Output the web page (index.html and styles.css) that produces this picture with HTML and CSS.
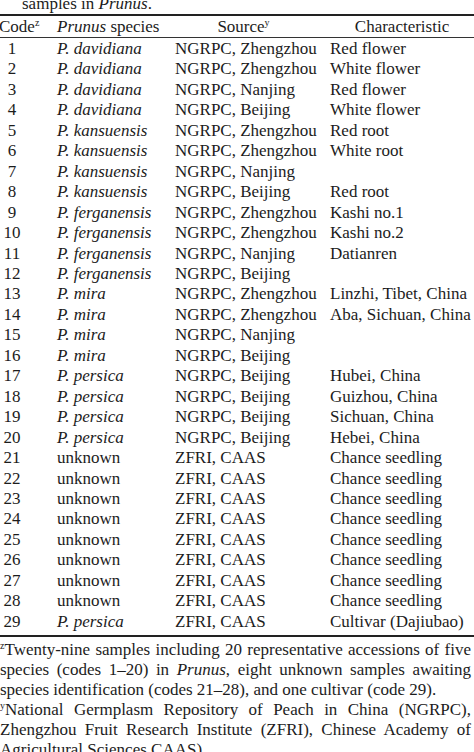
FILE: index.html
```html
<!DOCTYPE html>
<html>
<head>
<meta charset="utf-8">
<link rel="stylesheet" href="styles.css">
</head>
<body>
<div class="page">
  <div class="title">samples in <i>Prunus</i>.</div>
  <table class="data">
    <colgroup>
      <col class="c-code"><col class="c-sp"><col class="c-src"><col class="c-ch">
    </colgroup>
    <thead>
      <tr>
        <th class="h-code">Code<sup>z</sup></th>
        <th class="h-sp"><i>Prunus</i> species</th>
        <th class="h-src">Source<sup>y</sup></th>
        <th class="h-ch">Characteristic</th>
      </tr>
    </thead>
    <tbody>
      <tr><td>1</td><td><i>P. davidiana</i></td><td>NGRPC, Zhengzhou</td><td>Red flower</td></tr>
      <tr><td>2</td><td><i>P. davidiana</i></td><td>NGRPC, Zhengzhou</td><td>White flower</td></tr>
      <tr><td>3</td><td><i>P. davidiana</i></td><td>NGRPC, Nanjing</td><td>Red flower</td></tr>
      <tr><td>4</td><td><i>P. davidiana</i></td><td>NGRPC, Beijing</td><td>White flower</td></tr>
      <tr><td>5</td><td><i>P. kansuensis</i></td><td>NGRPC, Zhengzhou</td><td>Red root</td></tr>
      <tr><td>6</td><td><i>P. kansuensis</i></td><td>NGRPC, Zhengzhou</td><td>White root</td></tr>
      <tr><td>7</td><td><i>P. kansuensis</i></td><td>NGRPC, Nanjing</td><td></td></tr>
      <tr><td>8</td><td><i>P. kansuensis</i></td><td>NGRPC, Beijing</td><td>Red root</td></tr>
      <tr><td>9</td><td><i>P. ferganensis</i></td><td>NGRPC, Zhengzhou</td><td>Kashi no.1</td></tr>
      <tr><td>10</td><td><i>P. ferganensis</i></td><td>NGRPC, Zhengzhou</td><td>Kashi no.2</td></tr>
      <tr><td>11</td><td><i>P. ferganensis</i></td><td>NGRPC, Nanjing</td><td>Datianren</td></tr>
      <tr><td>12</td><td><i>P. ferganensis</i></td><td>NGRPC, Beijing</td><td></td></tr>
      <tr><td>13</td><td><i>P. mira</i></td><td>NGRPC, Zhengzhou</td><td>Linzhi, Tibet, China</td></tr>
      <tr><td>14</td><td><i>P. mira</i></td><td>NGRPC, Zhengzhou</td><td>Aba, Sichuan, China</td></tr>
      <tr><td>15</td><td><i>P. mira</i></td><td>NGRPC, Nanjing</td><td></td></tr>
      <tr><td>16</td><td><i>P. mira</i></td><td>NGRPC, Beijing</td><td></td></tr>
      <tr><td>17</td><td><i>P. persica</i></td><td>NGRPC, Beijing</td><td>Hubei, China</td></tr>
      <tr><td>18</td><td><i>P. persica</i></td><td>NGRPC, Beijing</td><td>Guizhou, China</td></tr>
      <tr><td>19</td><td><i>P. persica</i></td><td>NGRPC, Beijing</td><td>Sichuan, China</td></tr>
      <tr><td>20</td><td><i>P. persica</i></td><td>NGRPC, Beijing</td><td>Hebei, China</td></tr>
      <tr><td>21</td><td>unknown</td><td>ZFRI, CAAS</td><td>Chance seedling</td></tr>
      <tr><td>22</td><td>unknown</td><td>ZFRI, CAAS</td><td>Chance seedling</td></tr>
      <tr><td>23</td><td>unknown</td><td>ZFRI, CAAS</td><td>Chance seedling</td></tr>
      <tr><td>24</td><td>unknown</td><td>ZFRI, CAAS</td><td>Chance seedling</td></tr>
      <tr><td>25</td><td>unknown</td><td>ZFRI, CAAS</td><td>Chance seedling</td></tr>
      <tr><td>26</td><td>unknown</td><td>ZFRI, CAAS</td><td>Chance seedling</td></tr>
      <tr><td>27</td><td>unknown</td><td>ZFRI, CAAS</td><td>Chance seedling</td></tr>
      <tr><td>28</td><td>unknown</td><td>ZFRI, CAAS</td><td>Chance seedling</td></tr>
      <tr class="last"><td>29</td><td><i>P. persica</i></td><td>ZFRI, CAAS</td><td>Cultivar (Dajiubao)</td></tr>
    </tbody>
  </table>
  <div class="notes">
    <p><sup>z</sup>Twenty-nine samples including 20 representative accessions of five species (codes 1–20) in <i>Prunus</i>, eight unknown samples awaiting species identification (codes 21–28), and one cultivar (code 29).</p>
    <p><sup>y</sup>National Germplasm Repository of Peach in China (NGRPC), Zhengzhou Fruit Research Institute (ZFRI), Chinese Academy of Agricultural Sciences CAAS).</p>
  </div>
</div>
</body>
</html>
```
FILE: styles.css
```css
html, body {
  margin: 0;
  padding: 0;
  background: #fff;
}
body {
  font-family: "Liberation Serif", "Times New Roman", serif;
  font-size: 17px;
  color: #1c1c1c;
  overflow: hidden;
}
.page {
  width: 474px;
  height: 752px;
  overflow: hidden;
}
.title {
  margin-top: -6px;
  padding-left: 22px;
  line-height: 20px;
  height: 20px;
}
.data {
  margin-top: 0;
  width: 474px;
  border-collapse: collapse;
  table-layout: fixed;
  border-top: 2px solid #222;
  border-bottom: 2px solid #222;
}
.c-code { width: 57px; }
.c-sp { width: 118px; }
.c-src { width: 155px; }
.c-ch { width: 144px; }
.data th, .data td {
  padding: 0;
  font-weight: normal;
  white-space: nowrap;
  text-align: left;
  vertical-align: top;
}
.data thead tr {
  border-bottom: 1px solid #333;
}
.data th {
  height: 21px;
  line-height: 21px;
}
.data td {
  height: 20.46px;
  line-height: 20.46px;
}
.data tbody tr:first-child td {
  padding-top: 1px;
}
.data td:first-child {
  text-align: center;
  padding-right: 33px;
}
.data tr.last td {
  padding-bottom: 3px;
}
.h-code {
  position: relative;
  left: -1px;
}
.h-src {
  text-align: center !important;
  padding-right: 18px !important;
}
.h-ch {
  text-align: center !important;
}
sup {
  font-size: 10px;
  line-height: 0;
  vertical-align: 6px;
}
.notes {
  margin-top: 3px;
  padding-right: 3px;
}
.notes p {
  margin: 0;
  line-height: 20px;
  text-align: justify;
}
```
